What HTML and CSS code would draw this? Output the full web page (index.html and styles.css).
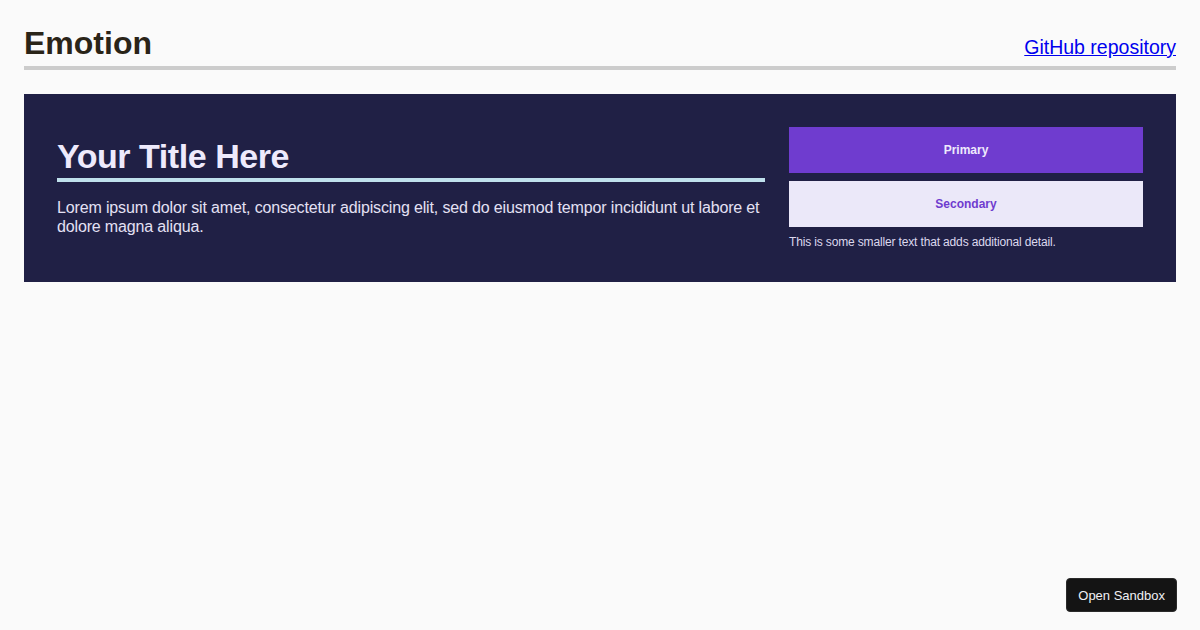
FILE: index.html
```html
<!DOCTYPE html>
<html>
<head>
<meta charset="utf-8">
<link rel="stylesheet" href="styles.css">
</head>
<body>
<header class="site-header">
  <h1 class="site-title">Emotion</h1>
  <a class="repo-link" href="#">GitHub repository</a>
</header>
<section class="hero">
  <div class="hero-main">
    <h2 class="hero-title">Your Title Here</h2>
    <p class="hero-text">Lorem ipsum dolor sit amet, consectetur adipiscing elit, sed do eiusmod tempor incididunt ut labore et dolore magna aliqua.</p>
  </div>
  <div class="hero-side">
    <button class="btn btn-primary">Primary</button>
    <button class="btn btn-secondary">Secondary</button>
    <p class="hero-note">This is some smaller text that adds additional detail.</p>
  </div>
</section>
<button class="sandbox-btn">Open Sandbox</button>
</body>
</html>
```
FILE: styles.css
```css
html, body {
  margin: 0;
  padding: 0;
  background: #fafafa;
  font-family: "Liberation Sans", Arial, sans-serif;
}
body {
  padding: 24px;
}
.site-header {
  display: flex;
  justify-content: space-between;
  align-items: flex-end;
  border-bottom: 4px solid #cccccc;
  padding-bottom: 4px;
}
.site-title {
  margin: 0;
  font-size: 32px;
  line-height: 38px;
  font-weight: bold;
  color: #2a2418;
}
.repo-link {
  font-size: 19.5px;
  line-height: 24px;
  color: #0000ee;
  text-decoration: underline;
  margin-bottom: 3px;
}
.hero {
  margin-top: 24px;
  background: #202045;
  padding: 33px;
  display: grid;
  grid-template-columns: 2fr 1fr;
  column-gap: 24px;
}
.hero-title {
  margin: 10px 0 0;
  font-size: 34px;
  line-height: 38px;
  letter-spacing: -0.45px;
  font-weight: bold;
  color: #eeeafc;
  padding-bottom: 3px;
  border-bottom: 4px solid #bfe0ec;
}
.hero-text {
  margin: 16px 0 0;
  font-size: 16px;
  line-height: 19px;
  letter-spacing: -0.15px;
  color: #e4e0f4;
}
.hero-side {
  display: flex;
  flex-direction: column;
  gap: 8px;
}
.btn {
  border: none;
  height: 46px;
  font-family: "Liberation Sans", Arial, sans-serif;
  font-size: 12px;
  font-weight: bold;
  cursor: pointer;
}
.btn-primary {
  background: #6f3ccf;
  color: #eeeafc;
}
.btn-secondary {
  background: #ebe8f9;
  color: #6f3ccf;
}
.hero-note {
  margin: 0;
  font-size: 12px;
  line-height: 14px;
  letter-spacing: -0.15px;
  color: #dcd8ee;
}
.sandbox-btn {
  position: fixed;
  right: 23px;
  bottom: 18px;
  background: #141414;
  color: #f0f0f5;
  border: 1px solid #2a2a2a;
  border-radius: 4px;
  padding: 0 11px;
  height: 34px;
  font-family: "Liberation Sans", Arial, sans-serif;
  font-size: 13px;
}
```
